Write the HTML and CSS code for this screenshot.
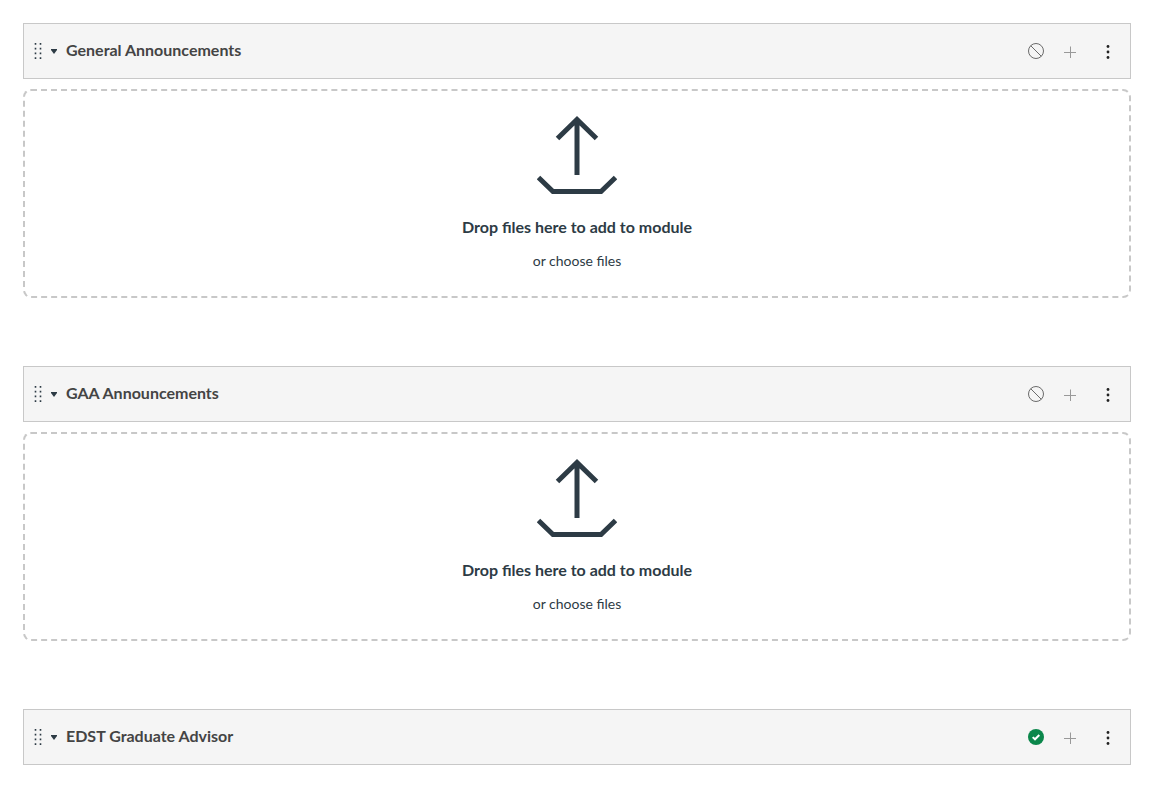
FILE: index.html
```
<!DOCTYPE html>
<html lang="en">
<head>
<meta charset="utf-8">
<title>Modules</title>
<link rel="stylesheet" href="styles.css">
</head>
<body>
<svg class="sprite" aria-hidden="true">
  <symbol id="grip" viewBox="0 0 8 16"><path d="M.7 0h1.600v1.700H.7zM5.700 0h1.600v1.700H5.700zM.7 4.800h1.600v1.700H.7zM5.700 4.800h1.600v1.700H5.700zM.7 9.500h1.600v1.700H.7zM5.700 9.500h1.600v1.700H5.700zM.7 14.200h1.600v1.700H.7zM5.700 14.200h1.600v1.700H5.700z"/></symbol>
  <symbol id="caret" viewBox="0 0 6 6"><path d="M0 1h6v1L3 6 0 2z"/></symbol>
  <symbol id="blocked" viewBox="0 0 16 16"><circle cx="8" cy="8" r="7.5"/><path d="M2.7 2.7l10.6 10.6"/></symbol>
  <symbol id="published" viewBox="0 0 16 16"><circle cx="8" cy="8" r="8"/><path d="M4.7 8.1l2.3 2.2 4.3-4.3"/></symbol>
  <symbol id="plus" viewBox="0 0 12 14"><path d="M0 8.5h12M6.5 2.500v12"/></symbol>
  <symbol id="dots" viewBox="0 0 4 16"><circle cx="2" cy="3.500" r="1.4"/><circle cx="2" cy="9" r="1.4"/><circle cx="2" cy="14.500" r="1.4"/></symbol>
  <symbol id="upload" viewBox="0 0 80 78"><path d="M40 59V4M20.500 22.500L40 3.500l19.500 19M1.500 61.500L16 75.500h48l14.500-14"/></symbol>
</svg>
<main class="modules">
  <section class="module">
    <header class="module-header">
      <button class="icon-button grip" aria-label="Move module"><svg><use href="#grip"/></svg></button>
      <button class="icon-button caret" aria-label="Collapse module"><svg><use href="#caret"/></svg></button>
      <h2 class="module-title">General Announcements</h2>
      <button class="icon-button blocked" aria-label="Publish"><svg><use href="#blocked"/></svg></button>
      <button class="icon-button plus" aria-label="Add item"><svg><use href="#plus"/></svg></button>
      <button class="icon-button dots" aria-label="Module settings"><svg><use href="#dots"/></svg></button>
    </header>
    <button class="dropzone">
      <svg class="upload"><use href="#upload"/></svg>
      <span class="drop-title">Drop files here to add to module</span>
      <span class="drop-hint">or choose files</span>
    </button>
  </section>
  <section class="module">
    <header class="module-header">
      <button class="icon-button grip" aria-label="Move module"><svg><use href="#grip"/></svg></button>
      <button class="icon-button caret" aria-label="Collapse module"><svg><use href="#caret"/></svg></button>
      <h2 class="module-title">GAA Announcements</h2>
      <button class="icon-button blocked" aria-label="Publish"><svg><use href="#blocked"/></svg></button>
      <button class="icon-button plus" aria-label="Add item"><svg><use href="#plus"/></svg></button>
      <button class="icon-button dots" aria-label="Module settings"><svg><use href="#dots"/></svg></button>
    </header>
    <button class="dropzone">
      <svg class="upload"><use href="#upload"/></svg>
      <span class="drop-title">Drop files here to add to module</span>
      <span class="drop-hint">or choose files</span>
    </button>
  </section>
  <section class="module">
    <header class="module-header">
      <button class="icon-button grip" aria-label="Move module"><svg><use href="#grip"/></svg></button>
      <button class="icon-button caret" aria-label="Collapse module"><svg><use href="#caret"/></svg></button>
      <h2 class="module-title">EDST Graduate Advisor</h2>
      <button class="icon-button published" aria-label="Unpublish"><svg><use href="#published"/></svg></button>
      <button class="icon-button plus" aria-label="Add item"><svg><use href="#plus"/></svg></button>
      <button class="icon-button dots" aria-label="Module settings"><svg><use href="#dots"/></svg></button>
    </header>
  </section>
</main>
</body>
</html>
```
FILE: styles.css
```
* { box-sizing: border-box; }
body {
  margin: 0;
  background: #fff;
  color: #2d3b45;
  font-family: Lato, "Liberation Sans", sans-serif;
  font-size: 16px;
}
.sprite { display: none; }
.modules {
  display: flex;
  flex-direction: column;
  gap: 68px;
  padding: 23px 44px 23px 23px;
}
.module {
  display: flex;
  flex-direction: column;
  gap: 10px;
}
.module-header {
  display: flex;
  align-items: center;
  padding: 15px 14px 15px 6px;
  background: #f5f5f5;
  border: 1px solid #c8c8c8;
}
.module-title {
  flex: 1;
  margin: 0;
  padding: 0 0 2px 4px;
  font-size: 16px;
  font-weight: 700;
  line-height: 22px;
  color: #444;
}
.icon-button {
  display: flex;
  align-items: center;
  justify-content: center;
  width: 16px;
  height: 24px;
  padding: 0;
  border: 0;
  background: none;
  color: #2d3b45;
  cursor: pointer;
}
.grip svg { width: 8px; height: 16px; fill: currentColor; }
.caret svg { width: 6px; height: 6px; fill: currentColor; }
.blocked svg { width: 16px; height: 16px; fill: none; stroke: #6b6b6b; }
.published svg { width: 16px; height: 16px; fill: #0b874b; }
#published path { fill: none; stroke: #fff; stroke-width: 2; }
.plus { width: 52px; margin-right: 4px; }
.plus svg { width: 12px; height: 14px; stroke: #999; }
.dots svg { width: 4px; height: 16px; fill: #222; }
.dropzone {
  display: flex;
  flex-direction: column;
  align-items: center;
  padding: 25px 0;
  border: 2px dashed #c8c8c8;
  border-radius: 8px;
  background: #fff;
  color: #2d3b45;
  font-family: inherit;
  cursor: pointer;
}
.upload {
  width: 80px;
  height: 78px;
  margin-bottom: 21px;
  fill: none;
  stroke: currentColor;
  stroke-width: 5;
}
.drop-title {
  margin-bottom: 12px;
  font-size: 16px;
  font-weight: 700;
  line-height: 24px;
}
.drop-hint { font-size: 14px; line-height: 20px; }
```
